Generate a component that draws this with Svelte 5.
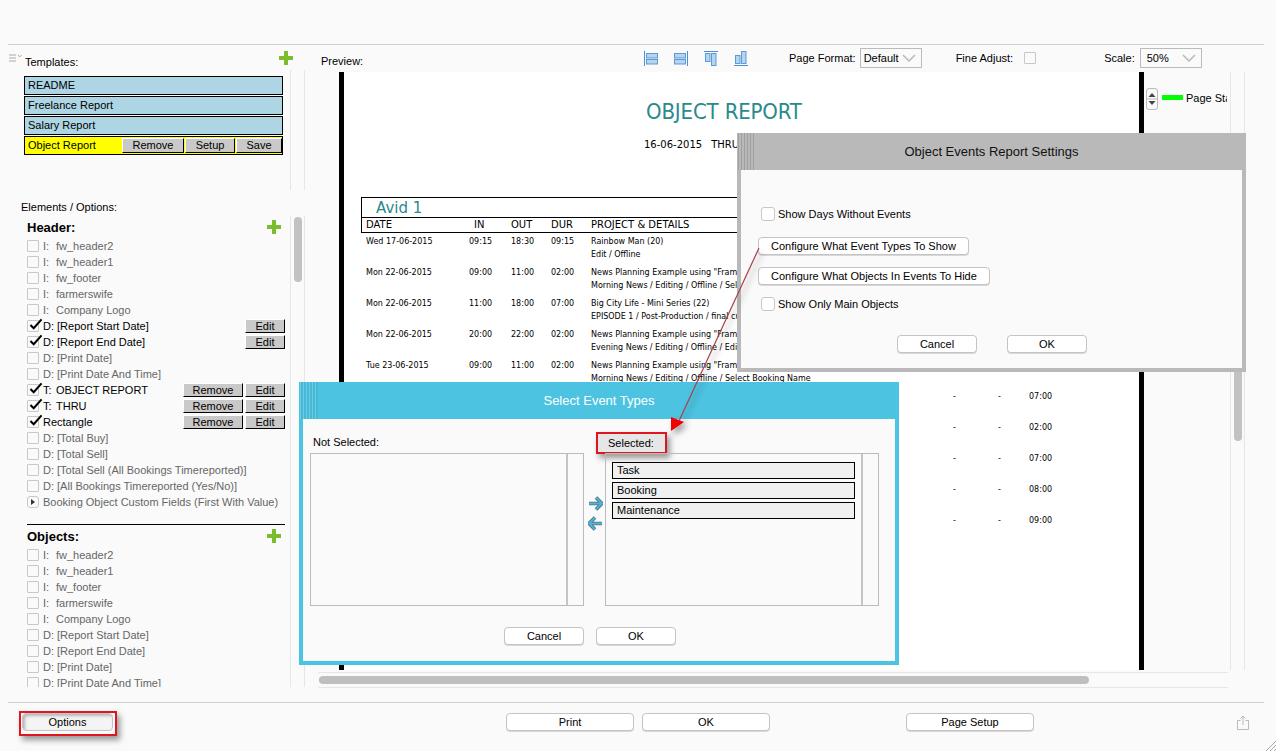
<script lang="ts">
  // Report designer window with the two settings dialogs open on top of it.

  type Row = { label: string; on?: boolean; remove?: boolean; edit?: boolean; name?: boolean };

  const templates = ["README", "Freelance Report", "Salary Report"];

  const headerRows: Row[] = [
    { label: "I:", name: true },
    { label: "I:", name: true },
    { label: "I:", name: true },
    { label: "I:", name: true },
    { label: "I:", name: true },
  ];
  const imageNames = ["fw_header2", "fw_header1", "fw_footer", "farmerswife", "Company Logo"];

  const reportRows = [
    { date: "Wed 17-06-2015", start: "09:15", end: "18:30", dur: "09:15", project: "Rainbow Man (20)", detail: "Edit / Offline", total: "" },
    { date: "Mon 22-06-2015", start: "09:00", end: "11:00", dur: "02:00", project: "News Planning Example using \"Framework\" (21)", detail: "Morning News / Editing / Offline / Select Booking Name", total: "" },
    { date: "Mon 22-06-2015", start: "11:00", end: "18:00", dur: "07:00", project: "Big City Life - Mini Series (22)", detail: "EPISODE 1 / Post-Production / final cut", total: "" },
    { date: "Mon 22-06-2015", start: "20:00", end: "22:00", dur: "02:00", project: "News Planning Example using \"Framework\" (21)", detail: "Evening News / Editing / Offline / Edit", total: "" },
    { date: "Tue 23-06-2015", start: "09:00", end: "11:00", dur: "02:00", project: "News Planning Example using \"Framework\" (21)", detail: "Morning News / Editing / Offline / Select Booking Name", total: "" },
    { date: "", start: "", end: "", dur: "", project: "", detail: "", total: "07:00" },
    { date: "", start: "", end: "", dur: "", project: "", detail: "", total: "02:00" },
    { date: "", start: "", end: "", dur: "", project: "", detail: "", total: "07:00" },
    { date: "", start: "", end: "", dur: "", project: "", detail: "", total: "08:00" },
    { date: "", start: "", end: "", dur: "", project: "", detail: "", total: "09:00" },
  ];

  const headerOptions: Row[] = [
    ...headerRows,
    { label: "D: [Report Start Date]", on: true, edit: true },
    { label: "D: [Report End Date]", on: true, edit: true },
    { label: "D: [Print Date]" },
    { label: "D: [Print Date And Time]" },
    { label: "T:", name: true, on: true, remove: true, edit: true },
    { label: "T:", name: true, on: true, remove: true, edit: true },
    { label: "Rectangle", on: true, remove: true, edit: true },
    { label: "D: [Total Buy]" },
    { label: "D: [Total Sell]" },
    { label: "D: [Total Sell (All Bookings Timereported)]" },
    { label: "D: [All Bookings Timereported (Yes/No)]" },
  ];
  const headerNames = [...imageNames, "", "", "", "", "OBJECT REPORT", "THRU"];

  const objectOptions: Row[] = [
    ...headerRows,
    { label: "D: [Report Start Date]" },
    { label: "D: [Report End Date]" },
    { label: "D: [Print Date]" },
    { label: "D: [Print Date And Time]" },
  ];

  const selected = ["Task", "Booking", "Maintenance"];
</script>

{#snippet plus()}
  <svg class="plus" viewBox="0 0 14 14"><path d="M5 0h4v5h5v4H9v5H5V9H0V5h5z" fill="#7cbd2e" /></svg>
{/snippet}

{#snippet option(row: Row, name: string)}
  <div class="opt" class:on={row.on}>
    <span class="box">
      {#if row.on}
        <svg class="tick" viewBox="0 0 15 13"><path d="M1.5 7.5 5 11 13.5 1.5" fill="none" stroke="#000" stroke-width="2.2" /></svg>
      {/if}
    </span>
    <span class="opt-label" class:short={row.name}>{row.label}</span>
    {#if row.name}<span>{name}</span>{/if}
    <span class="opt-actions">
      {#if row.remove}<button class="flat rm">Remove</button>{/if}
      {#if row.edit}<button class="flat ed">Edit</button>{/if}
    </span>
  </div>
{/snippet}

<div class="app">
  <div class="top"></div>

  <div class="main">
    <aside class="side">
      <div class="side-top">
        <div class="tpl">
          <div class="tpl-head">
            <svg class="menu" viewBox="0 0 13 8"><path d="M0 1h7M0 4h7M0 7h7" stroke="#aaa" fill="none" /><path d="M9 1l1.7 2L12.500 1" stroke="#aaa" fill="none" /></svg>
            <span>Templates:</span>
            {@render plus()}
          </div>
          {#each templates as t}
            <div class="tpl-row">{t}</div>
          {/each}
          <div class="tpl-row cur">
            <span class="cur-name">Object Report</span>
            <button class="flat b-remove">Remove</button>
            <button class="flat b-setup">Setup</button>
            <button class="flat b-save">Save</button>
          </div>
        </div>
        <div class="track short-track"></div>
      </div>

      <div class="el-title">Elements / Options:</div>

      <div class="side-list">
        <div class="opts">
          <div class="group-head"><b>Header:</b>{@render plus()}</div>
          {#each headerOptions as row, i}
            {@render option(row, headerNames[i])}
          {/each}
          <div class="opt">
            <span class="disclose"></span>
            <span class="opt-label">Booking Object Custom Fields (First With Value)</span>
          </div>
          <hr />
          <div class="group-head second"><b>Objects:</b>{@render plus()}</div>
          {#each objectOptions as row, i}
            {@render option(row, imageNames[i])}
          {/each}
        </div>
        <div class="track"><div class="thumb side-thumb"></div></div>
      </div>
    </aside>

    <section class="preview">
      <div class="toolbar">
        <span class="prev-label">Preview:</span>
        <div class="aligns">
          <svg viewBox="0 0 14 15"><path d="M.5 0v15" stroke="#4a90d9" /><rect x="2.500" y="2.500" width="11" height="4.500" fill="#b5d4ee" stroke="#5b9bd8" /><rect x="2.500" y="8.500" width="11" height="4.500" fill="#b5d4ee" stroke="#5b9bd8" /></svg>
          <svg viewBox="0 0 14 15"><path d="M13.500 0v15" stroke="#4a90d9" /><rect x=".5" y="2.500" width="11" height="4.500" fill="#b5d4ee" stroke="#5b9bd8" /><rect x=".5" y="8.500" width="11" height="4.500" fill="#b5d4ee" stroke="#5b9bd8" /></svg>
          <svg viewBox="0 0 14 15"><path d="M0 .5h14" stroke="#4a90d9" /><rect x="1.500" y="2.500" width="4.500" height="8" fill="#b5d4ee" stroke="#5b9bd8" /><rect x="7.500" y="2.500" width="4.500" height="12" fill="#b5d4ee" stroke="#5b9bd8" /></svg>
          <svg viewBox="0 0 14 15"><path d="M0 14.500h14" stroke="#4a90d9" /><rect x="1.500" y="4.500" width="4.500" height="8" fill="#b5d4ee" stroke="#5b9bd8" /><rect x="7.500" y=".5" width="4.500" height="12" fill="#b5d4ee" stroke="#5b9bd8" /></svg>
        </div>
        <span class="tb-format">Page Format:</span>
        <span class="select fmt">Default<svg viewBox="0 0 14 8"><path d="M1 1l6 6 6-6" fill="none" stroke="#bbb" stroke-width="1.600" /></svg></span>
        <span class="tb-fine">Fine Adjust:</span>
        <span class="box fine"></span>
        <span class="tb-scale">Scale:</span>
        <span class="select pct">50%<svg viewBox="0 0 14 8"><path d="M1 1l6 6 6-6" fill="none" stroke="#bbb" stroke-width="1.600" /></svg></span>
      </div>

      <div class="stage">
        <div class="sheet">
          <div class="page">
            <h1>OBJECT REPORT</h1>
            <div class="range"><span>16-06-2015</span><span>THRU</span></div>
            <div class="frame">
              <div class="frame-title">Avid 1</div>
              <div class="cols">
                <span>DATE</span><span class="c-in">IN</span><span>OUT</span><span>DUR</span><span>PROJECT &amp; DETAILS</span>
              </div>
            </div>
            <div class="rows">
              {#each reportRows as r}
                <div class="rrow">
                  <span>{r.date}</span><span>{r.start}</span><span>{r.end}</span><span>{r.dur}</span>
                  <span class="proj">{r.project}<br />{r.detail}</span>
                  {#if r.total}<span>-</span><span>-</span><span>{r.total}</span>{/if}
                </div>
              {/each}
            </div>
          </div>
          <div class="legend">
            <span class="stepper">
              <svg viewBox="0 0 10 20"><path d="M5 4l3.500 4h-7zM5 16l3.500-4h-7z" fill="#444" /><path d="M0 10h10" stroke="#bbb" /></svg>
            </span>
            <span class="swatch"></span>
            <span class="legend-text">Page Start</span>
          </div>
        </div>
        <div class="track v-track"><div class="thumb v-thumb"></div></div>
      </div>

      <div class="hscroll"><div class="hthumb"></div></div>
    </section>
  </div>

  <footer class="bar">
    <span class="options-mark"><button class="mac b-options">Options</button></span>
    <button class="mac b-print">Print</button>
    <button class="mac b-ok">OK</button>
    <button class="mac b-page">Page Setup</button>
    <svg class="share" viewBox="0 0 12 15"><path d="M3.500 5.500H.5v9h11v-9h-3M6 10V1M3.500 3.500 6 1l2.500 2.500" fill="none" stroke="#bbb" /></svg>
    <svg class="grip" viewBox="0 0 10 11"><path d="M0 11 10 1M4 11l6-6M8 11l2-2" stroke="#aaa" fill="none" /></svg>
  </footer>

  <!-- dialogs sit on top of the window -->
  <div class="dialog settings">
    <div class="dlg-title"><i class="stripes"></i>Object Events Report Settings</div>
    <div class="settings-body">
      <label class="check"><span class="box big"></span>Show Days Without Events</label>
      <button class="mac cfg one">Configure What Event Types To Show</button>
      <button class="mac cfg">Configure What Objects In Events To Hide</button>
      <label class="check two"><span class="box big"></span>Show Only Main Objects</label>
      <div class="dlg-foot settings-foot">
        <button class="mac">Cancel</button>
        <button class="mac">OK</button>
      </div>
    </div>
  </div>

  <div class="dialog types">
    <div class="dlg-title"><i class="stripes"></i>Select Event Types</div>
    <div class="types-body">
      <div class="pick">
        <div class="pick-col">
          <div class="pick-label not-label">Not Selected:</div>
          <div class="listbox"><div class="items"></div><div class="lb-track"></div></div>
        </div>
        <div class="movers">
          <svg viewBox="0 0 15 15"><path d="M8 1.500 14 7.500 8 13.500M14 7.500H1" fill="none" stroke="#57707c" stroke-width="3.600" /><path d="M8 1.500 14 7.500 8 13.500M14 7.500H1" fill="none" stroke="#4fb4d8" stroke-width="1.800" /></svg>
          <svg viewBox="0 0 15 15"><path d="M7 1.500 1 7.500 7 13.500M1 7.500H14" fill="none" stroke="#57707c" stroke-width="3.600" /><path d="M7 1.500 1 7.500 7 13.500M1 7.500H14" fill="none" stroke="#4fb4d8" stroke-width="1.800" /></svg>
        </div>
        <div class="pick-col">
          <div class="pick-label"><span class="sel-label">Selected:</span></div>
          <div class="listbox">
            <div class="items">
              {#each selected as s}<div class="item">{s}</div>{/each}
            </div>
            <div class="lb-track"></div>
          </div>
        </div>
      </div>
      <div class="dlg-foot types-foot">
        <button class="mac">Cancel</button>
        <button class="mac">OK</button>
      </div>
    </div>
  </div>

  <svg class="callout" viewBox="0 0 1276 751">
    <path d="M759 248 679 421" stroke="#a5404a" stroke-width="1.200" fill="none" />
    <path d="M671 417 684 422 671 431z" fill="#f00000" />
  </svg>
</div>

<style>
  :global(body) {
    margin: 0;
    background: #fafafa;
  }
  .app {
    position: relative;
    width: 1276px;
    height: 751px;
    overflow: hidden;
    background: #fafafa;
    color: #000;
    font: 11px "Liberation Sans", Arial, sans-serif;
  }
  button {
    font: inherit;
    color: #000;
    padding: 0;
    cursor: default;
  }
  .top {
    height: 44px;
    margin: 0 12px 0 8px;
    border-bottom: 1px solid #cfcfcf;
  }
  .main {
    display: flex;
    height: 657px;
  }

  /* sidebar */
  .side {
    width: 305px;
    flex: none;
  }
  .side-top {
    display: flex;
    justify-content: space-between;
    height: 145px;
  }
  .tpl {
    width: 283px;
  }
  .tpl-head {
    display: flex;
    align-items: flex-start;
    height: 31px;
    padding: 6px 0 0 9px;
    box-sizing: border-box;
    position: relative;
  }
  .tpl-head span {
    margin: 5px 0 0 3px;
  }
  .menu {
    width: 13px;
    height: 8px;
    margin-top: 3px;
  }
  .plus {
    width: 14px;
    height: 14px;
    display: block;
  }
  .tpl-head .plus {
    margin-left: auto;
    margin-right: -10px;
  }
  .tpl-row {
    display: flex;
    align-items: center;
    box-sizing: border-box;
    height: 19px;
    margin: 0 0 1px 24px;
    padding: 0 0 1px 3px;
    border: 1px solid #000;
    background: #add5e4;
    width: 259px;
  }
  .tpl-row.cur {
    background: #ff0;
    padding-bottom: 0;
  }
  .cur-name {
    flex: 1;
    padding-bottom: 1px;
  }
  .flat {
    height: 14px;
    box-sizing: border-box;
    line-height: 12px;
    background: #c9c9c9;
    border: 1px solid;
    border-color: #fff #000 #000 #fff;
    text-align: center;
  }
  .tpl-row .flat {
    height: 15px;
    margin-bottom: 1px;
    line-height: 11px;
  }
  .b-remove { width: 62px; }
  .b-setup { width: 50px; margin-left: 1px; }
  .b-save { width: 46px; margin-left: 1px; }
  .track {
    width: 15px;
    box-sizing: border-box;
    flex: none;
    border-left: 1px solid #e6e6e6;
    border-right: 1px solid #e6e6e6;
  }
  .short-track {
    margin-top: 25px;
  }
  .el-title {
    height: 26px;
    box-sizing: border-box;
    padding: 11px 0 0 21px;
  }
  .side-list {
    display: flex;
    height: 471px;
    overflow: hidden;
  }
  .opts {
    width: 258px;
    margin: 0 5px 0 27px;
    flex: none;
    overflow: hidden;
  }
  .thumb {
    background: #c2c2c2;
    border-radius: 4px;
  }
  .side-thumb {
    width: 8px;
    height: 65px;
    margin: 1px 0 0 3px;
  }
  .group-head {
    display: flex;
    justify-content: space-between;
    align-items: center;
    height: 22px;
    padding-right: 4px;
    font-size: 13px;
  }
  .opt {
    display: flex;
    align-items: center;
    height: 16px;
    color: #666;
    white-space: nowrap;
  }
  .opt.on {
    color: #000;
  }
  .box {
    position: relative;
    display: block;
    width: 12px;
    height: 12px;
    box-sizing: border-box;
    flex: none;
    background: #fafafa;
    border: 1px solid #c8c8c8;
    border-radius: 1px;
    margin-right: 4px;
  }
  .tick {
    position: absolute;
    left: 1px;
    top: -3px;
    width: 14px;
    height: 12px;
  }
  .opt-label.short {
    width: 13px;
  }
  .opt-actions {
    margin-left: auto;
    display: flex;
    gap: 2px;
  }
  .rm { width: 60px; }
  .ed { width: 40px; }
  .disclose {
    position: relative;
    width: 12px;
    height: 12px;
    box-sizing: border-box;
    border: 1px solid #c8c8c8;
    border-radius: 3px;
    margin-right: 4px;
    flex: none;
  }
  .disclose::after {
    content: "";
    position: absolute;
    left: 3px;
    top: 2px;
    border: 3px solid transparent;
    border-left: 4px solid #333;
    border-right: 0;
  }
  hr {
    margin: 14px 0 0;
    border: 0;
    border-top: 1px solid #000;
  }

  /* preview */
  .preview {
    flex: 1;
    min-width: 0;
  }
  .toolbar {
    position: relative;
    display: flex;
    align-items: center;
    height: 26px;
    margin-bottom: 1px;
  }
  .prev-label {
    width: 339px;
    padding: 6px 0 0 16px;
    box-sizing: border-box;
  }
  .aligns {
    display: flex;
    gap: 16px;
    margin-right: 41px;
  }
  .aligns svg {
    width: 14px;
    height: 15px;
  }
  .select {
    display: flex;
    align-items: center;
    justify-content: space-between;
    box-sizing: border-box;
    height: 20px;
    padding: 0 5px 0 3px;
    border: 1px solid #bbb;
    background: #fafafa;
  }
  .select svg {
    width: 14px;
    height: 8px;
  }
  .fmt { width: 62px; margin-left: 4px; }
  .tb-fine { margin-left: 34px; }
  .fine { width: 12px; margin: 0 0 0 11px; }
  .tb-scale { margin-left: 68px; }
  .pct { width: 62px; margin-left: 5px; padding-left: 6px; }

  .stage {
    display: flex;
    height: 598px;
  }
  .sheet {
    position: relative;
    flex: 1;
    min-width: 0;
    display: flex;
    overflow: hidden;
  }
  .page {
    width: 795px;
    height: 598px;
    flex: none;
    margin-left: 34px;
    background: #fff;
    border-left: 5px solid #000;
    border-right: 5px solid #000;
    box-sizing: content-box;
    font-family: "DejaVu Sans", Verdana, sans-serif;
    overflow: hidden;
    font-size: 8px;
  }
  h1 {
    margin: 28px 0 0 302px;
    font: 400 22px/24px "DejaVu Sans Condensed", "DejaVu Sans", sans-serif;
    letter-spacing: -0.15px;
    color: #2a8a8a;
  }
  .range {
    display: flex;
    gap: 9px;
    margin: 13px 0 0 300px;
    font-size: 10px;
    line-height: 16px;
  }
  .frame {
    box-sizing: border-box;
    height: 36px;
    margin: 44px 20px 0 17px;
    border: 1px solid #000;
  }
  .frame-title {
    height: 20px;
    box-sizing: border-box;
    padding-left: 14px;
    border-bottom: 1px solid #000;
    font-size: 15px;
    line-height: 20px;
    color: #2a8a8a;
  }
  .cols {
    display: grid;
    grid-template-columns: 108px 37px 40px 40px 1fr;
    padding-left: 4px;
    font-size: 10px;
    line-height: 14px;
  }
  .rows {
    margin: 3px 0 0 22px;
  }
  .rrow {
    display: grid;
    grid-template-columns: 103px 42px 40px 40px 362px 45px 31px 50px;
    height: 31px;
    line-height: 12.500px;
    white-space: nowrap;
  }
  .proj {
    overflow: hidden;
  }
  .legend {
    position: relative;
    display: flex;
    align-items: flex-start;
    flex: 1;
    min-width: 0;
    overflow: hidden;
    white-space: nowrap;
  }
  .stepper {
    display: block;
    width: 12px;
    height: 22px;
    box-sizing: border-box;
    margin: 16px 0 0 2px;
    border: 1px solid #bbb;
    border-radius: 3px;
    flex: none;
  }
  .stepper svg {
    display: block;
    width: 10px;
    height: 20px;
  }
  .swatch {
    width: 21px;
    height: 5px;
    margin: 23px 3px 0 4px;
    background: #0f0;
    flex: none;
  }
  .legend-text {
    margin-top: 20px;
    width: 41px;
    overflow: hidden;
    flex: none;
  }
  .v-track {
    margin-right: 31px;
  }
  .v-thumb {
    width: 8px;
    height: 300px;
    margin: 69px 0 0 3px;
  }
  .hscroll {
    box-sizing: border-box;
    height: 16px;
    margin: 2px 48px 0 13px;
    border-top: 1px solid #e6e6e6;
    border-bottom: 1px solid #e6e6e6;
    padding-top: 3px;
  }
  .hthumb {
    width: 770px;
    height: 8px;
    margin-left: 1px;
    background: #bfbfbf;
    border-radius: 4px;
  }

  /* bottom bar */
  .bar {
    position: relative;
    display: flex;
    align-items: flex-start;
    box-sizing: border-box;
    height: 49px;
    margin: 0 12px 0 8px;
    padding-top: 10px;
    border-top: 1px solid #cfcfcf;
  }
  .mac {
    display: block;
    box-sizing: border-box;
    height: 18px;
    width: 80px;
    background: #fff;
    border: 1px solid #c4c4c4;
    border-radius: 4px;
    box-shadow: 0 1px 0 #d8d8d8;
    text-align: center;
    white-space: nowrap;
  }
  .options-mark {
    position: relative;
    display: block;
    margin-left: 14px;
  }
  .options-mark::after {
    content: "";
    position: absolute;
    left: -3px;
    top: -2px;
    width: 98px;
    height: 25px;
    box-sizing: border-box;
    border: 2px solid #e0161e;
    box-shadow: 3px 4px 6px rgba(0, 0, 0, 0.4);
  }
  .b-options {
    width: 91px;
    background: #f4f4f4;
    box-shadow: inset 2px 2px 3px rgba(0, 0, 0, 0.25);
  }
  .b-print { width: 128px; margin-left: 393px; }
  .b-ok { width: 128px; margin-left: 8px; }
  .b-page { width: 128px; margin-left: 136px; }
  .share {
    width: 12px;
    height: 15px;
    margin: 2px 0 0 203px;
  }
  .grip {
    position: absolute;
    right: -12px;
    bottom: 0;
    width: 10px;
    height: 11px;
  }

  /* dialogs */
  .dialog {
    position: absolute;
    box-sizing: border-box;
    background: #fafafa;
    border: 4px solid;
    border-top: 0;
  }
  .dlg-title {
    position: relative;
    height: 37px;
    margin: 0 -4px;
    font-size: 13px;
    line-height: 37px;
    text-align: center;
  }
  .stripes {
    position: absolute;
    left: 1px;
    top: 0;
    width: 18px;
    height: 100%;
    background: repeating-linear-gradient(90deg, rgba(0, 0, 0, 0.14) 0 1px, transparent 1px 3px);
  }
  .settings {
    left: 737px;
    top: 133px;
    width: 509px;
    height: 239px;
    border-color: #b9b9b9;
  }
  .settings .dlg-title {
    background: #b9b9b9;
    color: #111;
  }
  .settings-body {
    padding: 37px 0 0 17px;
  }
  .check {
    display: flex;
    align-items: center;
    height: 14px;
    margin-left: 3px;
  }
  .box.big {
    width: 14px;
    height: 14px;
    border-radius: 3px;
    margin-right: 3px;
    background: #fff;
  }
  .cfg {
    width: auto;
    padding: 0 12px;
    margin-top: 12px;
  }
  .cfg.one {
    margin-top: 16px;
  }
  .check.two {
    margin-top: 12px;
  }
  .dlg-foot {
    display: flex;
    justify-content: center;
    gap: 30px;
  }
  .settings-foot {
    margin: 24px 0 0 -17px;
    padding-left: 1px;
  }
  .types {
    left: 299px;
    top: 382px;
    width: 600px;
    height: 283px;
    border-color: #4dc3e2;
  }
  .types .dlg-title {
    background: #4dc3e2;
    color: #fff;
  }
  .types .stripes {
    background: repeating-linear-gradient(90deg, rgba(255, 255, 255, 0.16) 0 1px, rgba(0, 0, 0, 0.06) 1px 3px);
  }
  .types-body {
    padding-left: 7px;
  }
  .pick {
    display: flex;
  }
  .pick-col {
    width: 274px;
  }
  .pick-label {
    height: 34px;
    padding: 17px 0 0 3px;
    box-sizing: border-box;
  }
  .not-label {
    padding-top: 17px;
  }
  .sel-label {
    display: block;
    width: 71px;
    height: 22px;
    box-sizing: border-box;
    margin: -4px 0 0 -12px;
    padding-left: 10px;
    line-height: 18px;
    background: #e6e6e6;
    border: 2px solid #e0161e;
    box-shadow: 3px 4px 6px rgba(0, 0, 0, 0.4);
    position: relative;
  }
  .listbox {
    position: relative;
    display: flex;
    box-sizing: border-box;
    height: 153px;
    border: 1px solid #bbb;
  }
  .items {
    flex: 1;
    padding: 8px 6px;
  }
  .lb-track {
    width: 15px;
    border-left: 2px solid #c4c4c4;
  }
  .item {
    box-sizing: border-box;
    height: 17px;
    margin-bottom: 3px;
    padding-left: 4px;
    line-height: 15px;
    background: #f0f0f0;
    border: 1px solid #000;
  }
  .movers {
    width: 21px;
    padding: 77px 0 0 4px;
    box-sizing: border-box;
    display: flex;
    flex-direction: column;
    gap: 5px;
  }
  .movers svg {
    display: block;
    width: 15px;
    height: 15px;
  }
  .types-foot {
    gap: 12px;
    margin-top: 21px;
    padding-right: 25px;
  }
  .callout {
    position: absolute;
    inset: 0;
    width: 1276px;
    height: 751px;
    pointer-events: none;
    filter: drop-shadow(3px 4px 3px rgba(0, 0, 0, 0.4));
  }
</style>
